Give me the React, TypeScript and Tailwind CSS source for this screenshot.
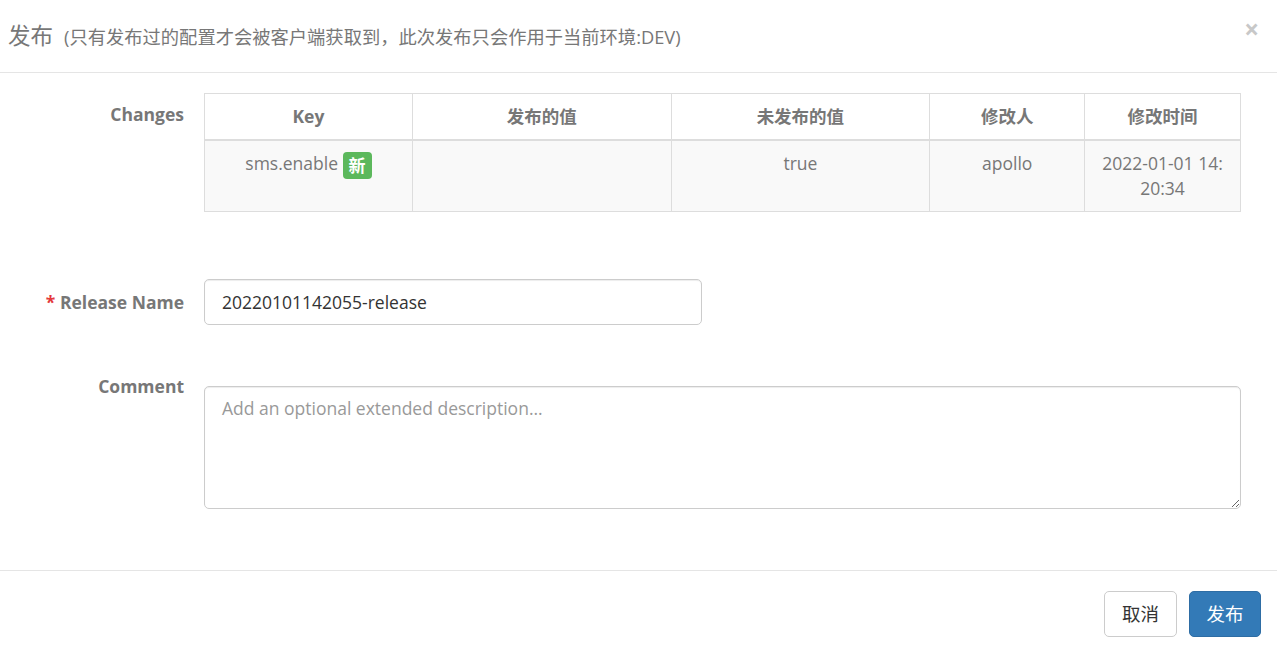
import React from 'react'

const font = '[font-family:"Open_Sans","Noto_Sans_CJK_SC",sans-serif]'

const columns = [
  { label: 'Key', width: 'w-[208px]' },
  { label: '发布的值', width: 'w-[259px]' },
  { label: '未发布的值', width: 'w-[259px]' },
  { label: '修改人', width: 'w-[155px]' },
  { label: '修改时间', width: 'w-[156px]' },
]

function Label({ children }: { children: React.ReactNode }) {
  return (
    <div className="w-[184px] shrink-0 text-right text-[17.5px] font-bold leading-[25px] text-[#777]">
      {children}
    </div>
  )
}

export default function App() {
  return (
    <div className={`${font} h-[654px] w-[1277px] bg-white text-[#333]`}>
      {/* header */}
      <div className="flex h-[73px] items-center justify-between border-b border-[#e5e5e5] pl-[8px] pr-[18px]">
        <h4 className="text-[22.5px] leading-none text-[#777]">
          发布
          <small className="ml-[11px] text-[18.3px] text-[#777]">
            (只有发布过的配置才会被客户端获取到，此次发布只会作用于当前环境:DEV)
          </small>
        </h4>
        <span className="mt-[-14px] text-[26px] font-bold leading-none text-[#c8c8c8]">×</span>
      </div>

      {/* body */}
      <div className="flex flex-col pr-[36px] pt-[20px]">
        <div className="flex gap-[20px]">
          <div className="pt-[9px]">
            <Label>Changes</Label>
          </div>
          <table className="flex-1 border-collapse border border-[#ddd] text-center text-[17.5px] leading-[25px]">
            <thead>
              <tr>
                {columns.map((c) => (
                  <th
                    key={c.label}
                    className={`${c.width} border border-b-2 border-[#ddd] px-[10px] py-[10px] font-bold text-[#777]`}
                  >
                    {c.label}
                  </th>
                ))}
              </tr>
            </thead>
            <tbody>
              <tr className="bg-[#f9f9f9] align-top text-[#777]">
                <td className="border border-[#ddd] px-[10px] py-[10px]">
                  sms.enable{' '}
                  <span className="inline-block rounded-[4px] bg-[#5cb85c] px-[6px] align-[-2px] text-[17px] font-bold leading-[27px] text-white">
                    新
                  </span>
                </td>
                <td className="border border-[#ddd] px-[10px] py-[10px]"></td>
                <td className="border border-[#ddd] px-[10px] py-[10px]">true</td>
                <td className="border border-[#ddd] px-[10px] py-[10px]">apollo</td>
                <td className="border border-[#ddd] px-[10px] py-[10px]">
                  2022-01-01 14:
                  <br />
                  20:34
                </td>
              </tr>
            </tbody>
          </table>
        </div>

        <div className="mt-[67px] flex items-center gap-[20px]">
          <Label>
            <span className="text-[#e4393c]">*</span> Release Name
          </Label>
          <input
            readOnly
            value="20220101142055-release"
            className="h-[46px] w-[498px] rounded-[5px] border border-[#ccc] px-[17px] text-[17.5px] text-[#333] shadow-[inset_0_1px_1px_rgba(0,0,0,0.075)] outline-none"
          />
        </div>

        <div className="mt-[61px] flex gap-[20px]">
          <div className="mt-[-12px]">
            <Label>Comment</Label>
          </div>
          <textarea
            placeholder="Add an optional extended description..."
            className="h-[123px] flex-1 rounded-[5px] border border-[#ccc] px-[17px] py-[9px] text-[17.5px] leading-[25px] text-[#333] shadow-[inset_0_1px_1px_rgba(0,0,0,0.075)] outline-none placeholder:text-[#999]"
          />
        </div>
      </div>

      {/* footer */}
      <div className="mt-[61px] flex justify-end gap-[12px] border-t border-[#e5e5e5] pr-[16px] pt-[20px]">
        <button className="h-[46px] w-[73px] rounded-[5px] border border-[#ccc] bg-white text-[18.5px] text-[#333]">
          取消
        </button>
        <button className="h-[46px] w-[72px] rounded-[5px] border border-[#2e6da4] bg-[#337ab7] text-[18.5px] text-white">
          发布
        </button>
      </div>
    </div>
  )
}
